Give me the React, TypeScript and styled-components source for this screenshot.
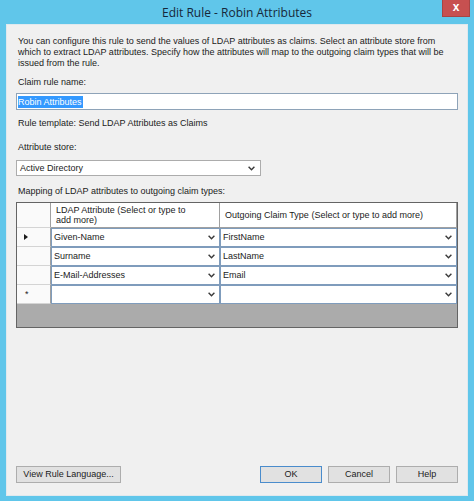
import * as React from 'react';
import styled, { createGlobalStyle } from 'styled-components';

const GlobalStyle = createGlobalStyle`
  html, body {
    margin: 0;
    padding: 0;
    background: #60c6ea;
  }
  body {
    font-family: 'Liberation Sans', Arial, sans-serif;
  }
`;

const colors = {
  frame: '#60c6ea',
  client: '#f0f0f0',
  text: '#1b1b1b',
  cellBorder: '#7f9cbc',
  gridGrey: '#ababab',
  gridLine: '#a0a0a0'
};

const Chevron = () => (
  <svg width="7" height="5" viewBox="0 0 7 5">
    <path d="M0.6 0.8 L3.5 3.8 L6.4 0.8" fill="none" stroke="#3a3a3a" strokeWidth="1.4" />
  </svg>
);

interface Mapping {
  ldap: string;
  claim: string;
  marker?: 'current' | 'new';
}

const rows: Mapping[] = [
  { ldap: 'Given-Name', claim: 'FirstName', marker: 'current' },
  { ldap: 'Surname', claim: 'LastName' },
  { ldap: 'E-Mail-Addresses', claim: 'Email' },
  { ldap: '', claim: '', marker: 'new' }
];

class App extends React.Component {
  public render() {
    return (
      <Window>
        <GlobalStyle />
        <TitleBar>
          <Title>Edit Rule - Robin Attributes</Title>
          <CloseButton>x</CloseButton>
        </TitleBar>
        <Client>
          <Intro>
            You can configure this rule to send the values of LDAP attributes as claims. Select an
            attribute store from
            <br />
            which to extract LDAP attributes. Specify how the attributes will map to the outgoing
            claim types that will be
            <br />
            issued from the rule.
          </Intro>
          <Label gap={8}>Claim rule name:</Label>
          <TextBox>
            <Selected>Robin Attributes</Selected>
          </TextBox>
          <Label gap={8}>Rule template: Send LDAP Attributes as Claims</Label>
          <Label gap={13}>Attribute store:</Label>
          <Select>
            <span>Active Directory</span>
            <Chevron />
          </Select>
          <Label gap={10}>Mapping of LDAP attributes to outgoing claim types:</Label>
          <Grid>
            <HeaderRow>
              <RowHead />
              <ColHead>
                LDAP Attribute (Select or type to
                <br />
                add more)
              </ColHead>
              <ColHead>Outgoing Claim Type (Select or type to add more)</ColHead>
            </HeaderRow>
            {rows.map((row, i) => (
              <DataRow key={i}>
                <RowHead>
                  {row.marker === 'current' && <Arrow />}
                  {row.marker === 'new' && <Star>*</Star>}
                </RowHead>
                <ComboCell>
                  <span>{row.ldap}</span>
                  <Chevron />
                </ComboCell>
                <ComboCell>
                  <span>{row.claim}</span>
                  <Chevron />
                </ComboCell>
              </DataRow>
            ))}
            <GridFiller />
          </Grid>
          <ButtonBar>
            <Button width={105}>View Rule Language...</Button>
            <ButtonGroup>
              <Button width={62} isDefault>
                OK
              </Button>
              <Button width={62}>Cancel</Button>
              <Button width={62}>Help</Button>
            </ButtonGroup>
          </ButtonBar>
        </Client>
      </Window>
    );
  }
}

const Window = styled.div`
  width: 474px;
  height: 501px;
  background: ${colors.frame};
  display: flex;
  flex-direction: column;
  box-sizing: border-box;
  overflow: hidden;
`;

const TitleBar = styled.div`
  position: relative;
  height: 24px;
  display: flex;
  align-items: center;
  justify-content: center;
`;

const Title = styled.div`
  font-family: 'Open Sans', 'Liberation Sans', sans-serif;
  font-size: 12px;
  color: #16283a;
  padding-top: 1px;
`;

const CloseButton = styled.div`
  position: absolute;
  right: 4px;
  top: 0;
  width: 28px;
  height: 17px;
  background: #c75050;
  border: 1px solid #a84444;
  border-top: none;
  box-sizing: border-box;
  color: #fff;
  font-weight: bold;
  font-size: 12px;
  line-height: 14px;
  text-align: center;
`;

const Client = styled.div`
  flex: 1;
  margin: 0 6px 5px 6px;
  background: ${colors.client};
  box-shadow: inset 0 0 0 1px #dfe9ee;
  padding: 12px 10px 13px 10px;
  display: flex;
  flex-direction: column;
  font-size: 9px;
  line-height: 11px;
  color: ${colors.text};
`;

const Intro = styled.p`
  margin: 0 0 0 2px;
  white-space: nowrap;
`;

const Label = styled.div<{ gap: number }>`
  margin-top: ${props => props.gap}px;
  padding-left: 2px;
`;

const TextBox = styled.div`
  margin-top: 5px;
  height: 17px;
  background: #fff;
  border: 1px solid #8ea3b8;
  box-sizing: border-box;
  display: flex;
  align-items: center;
  padding-left: 1px;
`;

const Selected = styled.span`
  background: #3399ff;
  color: #fff;
  line-height: 12px;
  padding-right: 1px;
`;

const Select = styled.div`
  margin-top: 7px;
  width: 245px;
  height: 16px;
  background: #fff;
  border: 1px solid #acacac;
  box-sizing: border-box;
  display: flex;
  align-items: center;
  justify-content: space-between;
  padding: 0 5px 0 3px;
`;

const Grid = styled.div`
  margin-top: 5px;
  height: 126px;
  border: 1px solid #646464;
  box-sizing: border-box;
  background: ${colors.gridGrey};
  display: flex;
  flex-direction: column;
`;

const HeaderRow = styled.div`
  display: grid;
  grid-template-columns: 34px 169px 1fr;
  height: 25px;
  background: #fff;
`;

const DataRow = styled.div`
  display: grid;
  grid-template-columns: 34px 169px 1fr;
  height: 19px;
  background: #fff;
`;

const RowHead = styled.div`
  border-right: 1px solid ${colors.gridLine};
  border-bottom: 1px solid #d4d4d4;
  background: #fafafa;
  display: flex;
  align-items: center;
  padding-left: 7px;
`;

const ColHead = styled.div`
  border-right: 1px solid ${colors.gridLine};
  border-bottom: 1px solid ${colors.gridLine};
  display: flex;
  align-items: center;
  padding-left: 5px;
  line-height: 10px;
  overflow: hidden;
  white-space: nowrap;
`;

const ComboCell = styled.div`
  border: 1px solid ${colors.cellBorder};
  box-sizing: border-box;
  display: flex;
  align-items: center;
  justify-content: space-between;
  padding: 0 4px 0 2px;
  background: #fff;
`;

const Arrow = styled.span`
  width: 0;
  height: 0;
  border-top: 3.5px solid transparent;
  border-bottom: 3.5px solid transparent;
  border-left: 4px solid #1b1b1b;
`;

const Star = styled.span`
  font-size: 9px;
  padding-left: 1px;
`;

const GridFiller = styled.div`
  flex: 1;
`;

const ButtonBar = styled.div`
  margin-top: auto;
  display: flex;
  justify-content: space-between;
`;

const ButtonGroup = styled.div`
  display: flex;
  gap: 6px;
`;

const Button = styled.div<{ width: number; isDefault?: boolean }>`
  width: ${props => props.width}px;
  height: 17px;
  box-sizing: border-box;
  background: #e1e1e1;
  border: 1px solid ${props => (props.isDefault ? '#4a8ccc' : '#adadad')};
  display: flex;
  align-items: center;
  justify-content: center;
  white-space: nowrap;
`;

export default App;
